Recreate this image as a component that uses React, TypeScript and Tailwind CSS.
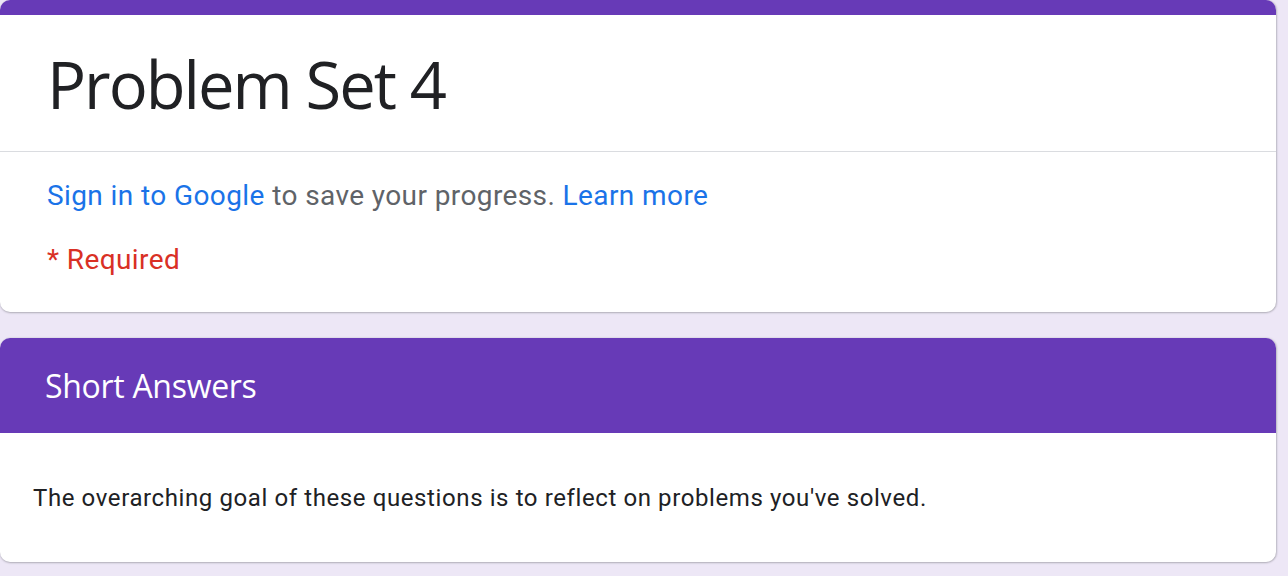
import React from "react";

const roboto = { fontFamily: "Roboto, 'Liberation Sans', sans-serif" };

const App = () => {
  return (
    <div className="w-[1288px] h-[576px] overflow-hidden bg-[#ede7f6]">
      <div className="w-[1276px] flex flex-col gap-[26px]">
        {/* header card */}
        <div className="bg-white rounded-[10px] overflow-hidden shadow-[0_1px_2px_rgba(60,64,67,0.3),1px_0_2px_rgba(60,64,67,0.2)]">
          <div className="h-[15px] bg-[#673ab7]" />
          <div className="h-[137px] flex items-center pl-[47px] pt-[2px] border-b border-[#dadce0]">
            <h1 className="font-['Open_Sans',sans-serif] text-[65px] leading-none text-[#202124] tracking-[-2px]">
              Problem Set 4
            </h1>
          </div>
          <div className="h-[160px] pl-[47px] pt-[26px] flex flex-col" style={roboto}>
            <p className="text-[28px] leading-[36px] text-[#5f6368] tracking-[0.4px]">
              <span className="text-[#1a73e8]">Sign in to Google</span> to save
              your progress. <span className="text-[#1a73e8]">Learn more</span>
            </p>
            <p className="mt-[28px] text-[28px] leading-[36px] text-[#d93025] tracking-[0.4px]">
              * Required
            </p>
          </div>
        </div>

        {/* section card */}
        <div className="bg-white rounded-[10px] overflow-hidden shadow-[0_1px_2px_rgba(60,64,67,0.3),1px_0_2px_rgba(60,64,67,0.2)]">
          <div className="h-[95px] bg-[#673ab7] flex items-center pl-[45px]">
            <h2 className="font-['Open_Sans',sans-serif] text-[32px] leading-none text-white tracking-[-0.3px]">
              Short Answers
            </h2>
          </div>
          <div className="h-[129px] pl-[33px] flex items-center" style={roboto}>
            <p className="text-[24px] leading-[32px] text-[#202124] tracking-[0.6px]">
              The overarching goal of these questions is to reflect on problems
              you've solved.
            </p>
          </div>
        </div>
      </div>
    </div>
  );
};

export default App;
